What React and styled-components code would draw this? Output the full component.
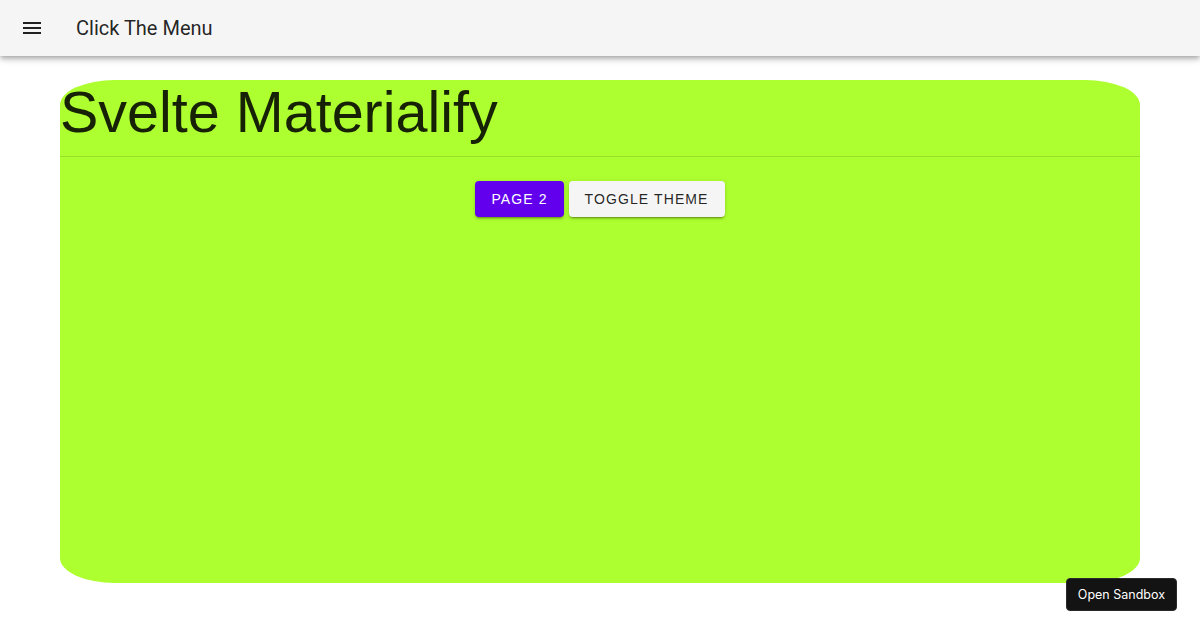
import React from 'react';
import styled, { createGlobalStyle } from 'styled-components';

const Global = createGlobalStyle`
  html, body {
    margin: 0;
    padding: 0;
    background: #ffffff;
    font-family: Roboto, "Liberation Sans", Arial, sans-serif;
  }
`;

const AppBar = styled.header`
  height: 56px;
  background: #f5f5f5;
  display: flex;
  align-items: center;
  padding: 0 16px;
  box-shadow: 0 2px 4px -1px rgba(0,0,0,.2), 0 4px 5px 0 rgba(0,0,0,.14), 0 1px 10px 0 rgba(0,0,0,.12);
  position: relative;
  z-index: 2;
`;

const MenuButton = styled.button`
  width: 32px;
  height: 32px;
  border: none;
  background: transparent;
  padding: 0;
  display: flex;
  align-items: center;
  justify-content: center;
  margin-right: 28px;
  color: rgba(0,0,0,.87);
`;

const Title = styled.div`
  font-size: 20px;
  color: rgba(0,0,0,.87);
  letter-spacing: 0;
`;

const Main = styled.main`
  padding: 24px 60px 0;
`;

const Card = styled.section`
  background: #adff2f;
  height: 503px;
  border-radius: 55px / 25px;
  overflow: hidden;
`;

const Heading = styled.h1`
  margin: 0;
  font-family: "Liberation Sans", Arial, sans-serif;
  font-weight: 400;
  font-size: 57.5px;
  line-height: 64px;
  padding: 0 0 12px;
  color: rgba(0,0,0,.87);
  border-bottom: 1px solid rgba(0,0,0,.12);
`;

const Actions = styled.div`
  display: flex;
  justify-content: center;
  gap: 5px;
  padding-top: 24px;
`;

const Button = styled.button`
  height: 36px;
  padding: 0 16px;
  border: none;
  border-radius: 4px;
  font-family: "Liberation Sans", Arial, sans-serif;
  font-size: 14px;
  font-weight: 400;
  letter-spacing: 1.1px;
  text-transform: uppercase;
  background: ${p => (p.$primary ? '#6200ee' : '#f5f5f5')};
  color: ${p => (p.$primary ? '#ffffff' : 'rgba(0,0,0,.87)')};
  box-shadow: 0 3px 1px -2px rgba(0,0,0,.2), 0 2px 2px 0 rgba(0,0,0,.14), 0 1px 5px 0 rgba(0,0,0,.12);
`;

const Sandbox = styled.a`
  position: fixed;
  right: 23px;
  bottom: 19px;
  height: 33px;
  padding: 0 11px;
  display: flex;
  align-items: center;
  background: #131313;
  color: #ffffff;
  border: 1px solid #2a2a2a;
  border-radius: 4px;
  font-family: Inter, "Liberation Sans", Arial, sans-serif;
  font-size: 12.5px;
  text-decoration: none;
  box-sizing: border-box;
`;

export default function App() {
  return (
    <>
      <Global />
      <AppBar>
        <MenuButton aria-label="menu">
          <svg width="24" height="24" viewBox="0 0 24 24">
            <path d="M3 6h18v2H3zm0 5h18v2H3zm0 5h18v2H3z" fill="currentColor" />
          </svg>
        </MenuButton>
        <Title>Click The Menu</Title>
      </AppBar>
      <Main>
        <Card>
          <Heading>Svelte Materialify</Heading>
          <Actions>
            <Button $primary>Page 2</Button>
            <Button>Toggle Theme</Button>
          </Actions>
        </Card>
      </Main>
      <Sandbox href="#">Open Sandbox</Sandbox>
    </>
  );
}
